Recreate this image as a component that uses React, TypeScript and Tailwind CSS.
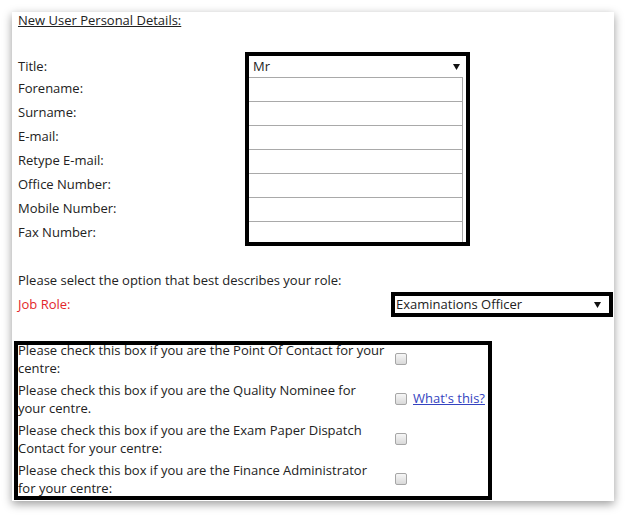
const Caret = () => (
  <svg width="7" height="6" viewBox="0 0 7 6" className="shrink-0">
    <polygon points="0,0 7,0 3.5,6" fill="#111" />
  </svg>
);

const CheckBox = () => (
  <span className="inline-block w-[12px] h-[12px] rounded-[2px] border border-[#a6a6a6] bg-gradient-to-b from-[#f6f6f6] to-[#d9d9d9] shrink-0" />
);

const labels = [
  "Forename:",
  "Surname:",
  "E-mail:",
  "Retype E-mail:",
  "Office Number:",
  "Mobile Number:",
  "Fax Number:",
];

const roles: { text: string; link?: boolean }[] = [
  { text: "Please check this box if you are the Point Of Contact for your centre:" },
  { text: "Please check this box if you are the Quality Nominee for your centre.", link: true },
  { text: "Please check this box if you are the Exam Paper Dispatch Contact for your centre:" },
  { text: "Please check this box if you are the Finance Administrator for your centre:" },
];

export default function App() {
  return (
    <div className="min-h-screen bg-white p-[12px] font-['Open_Sans',sans-serif] text-[13px] text-[#222]">
      <div className="w-[602px] h-[489px] bg-white shadow-[0_3px_9px_rgba(0,0,0,0.4)] pl-[2px] pr-[1px]">
        <div className="pl-[4px] leading-[16px]">
          <span className="underline">New User Personal Details:</span>
        </div>

        {/* personal details */}
        <div className="mt-[24px] flex">
          <div className="w-[231px] pl-[4px] pt-[4px] flex flex-col">
            <div className="h-[21px] flex items-center">Title:</div>
            {labels.map((l) => (
              <div key={l} className="h-[24px] flex items-center">
                {l}
              </div>
            ))}
          </div>
          <div className="w-[225px] h-[194px] border-4 border-black overflow-hidden">
            <div className="h-[21px] flex items-center justify-between pl-[4px] pr-[6px]">
              <span>Mr</span>
              <Caret />
            </div>
            {labels.map((l) => (
              <div key={l} className="h-[24px] w-[214px] border-t border-r border-[#a9a9a9]" />
            ))}
          </div>
        </div>

        <div className="mt-[25px] pl-[4px] leading-[18px]">
          Please select the option that best describes your role:
        </div>
        <div className="mt-[3px] h-[25px] flex items-center">
          <span className="pl-[4px] text-[#e3262b]">Job Role:</span>
          <div className="ml-auto w-[222px] h-[25px] border-4 border-black flex items-center justify-between pl-[1px] pr-[8px]">
            <span>Examinations Officer</span>
            <Caret />
          </div>
        </div>

        {/* contact roles */}
        <div className="mt-[24px] w-[478px] h-[159px] border-4 border-black overflow-hidden">
          <div className="-mt-[6px]">
            {roles.map((r) => (
              <div key={r.text} className="flex items-center py-[2px]">
                <div className="w-[367px] leading-[18px]">{r.text}</div>
                <div className="flex items-center pl-[10px] gap-[6px]">
                  <CheckBox />
                  {r.link && (
                    <a href="#" className="text-[#3443c0] underline">
                      What's this?
                    </a>
                  )}
                </div>
              </div>
            ))}
          </div>
        </div>
      </div>
    </div>
  );
}
